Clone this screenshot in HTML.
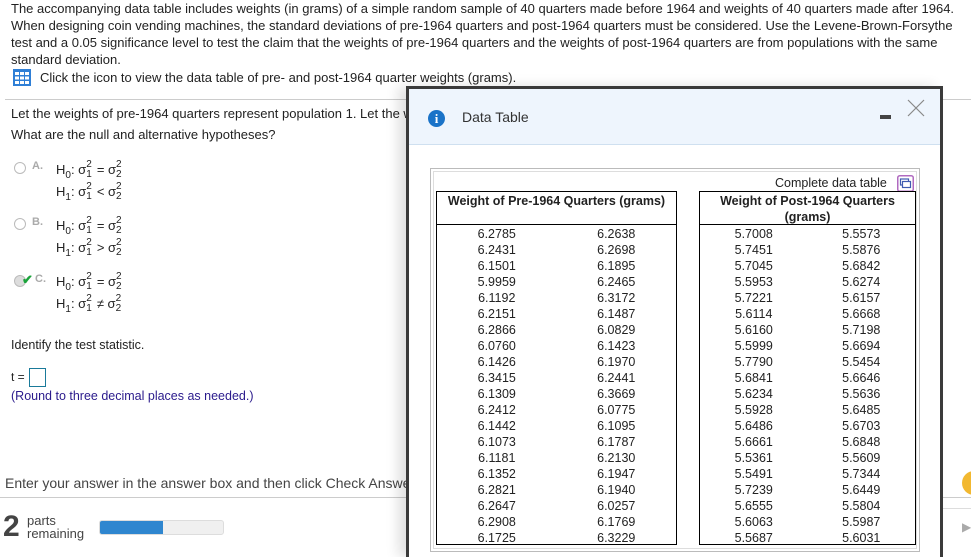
<!DOCTYPE html>
<html style="overflow:hidden;width:971px;height:557px"><head><meta charset="utf-8"><style>
*{margin:0;padding:0;box-sizing:border-box}
body{width:971px;height:557px;overflow:hidden;background:#fff;font-family:"Liberation Sans",Arial,sans-serif;color:#222;position:relative}
.a{position:absolute;white-space:nowrap}
.t{font-size:13px;line-height:17px}
.radio{position:absolute;width:12px;height:12px;border:1px solid #bbb;border-radius:50%;background:#fff}
.lbl{position:absolute;font-size:11px;color:#aaa;font-weight:bold}
.hyp{position:absolute;font-size:13px;white-space:nowrap;line-height:16px}
.ss{display:inline-block;position:relative;width:7px;height:16px;vertical-align:top;font-size:10px}
.ss .u{position:absolute;left:0;top:-5px}
.ss .d{position:absolute;left:0;top:5px}
.sub{font-size:10px;position:relative;top:4px}
.tb{position:absolute;border:1.5px solid #000;font-size:12.5px}
.tb .h{height:33px;border-bottom:1.5px solid #000;font-weight:bold;text-align:center;line-height:16px;padding-top:1px}
.tb .r{display:flex;height:16px;line-height:16px}
.tb .r span{flex:1;text-align:center}
</style></head><body>
<div class="a t" style="left:11px;top:0;width:950px;white-space:normal">The accompanying data table includes weights (in grams) of a simple random sample of 40 quarters made before 1964 and weights of 40 quarters made after 1964. When designing coin vending machines, the standard deviations of pre-1964 quarters and post-1964 quarters must be considered. Use the Levene-Brown-Forsythe test and a 0.05 significance level to test the claim that the weights of pre-1964 quarters and the weights of post-1964 quarters are from populations with the same standard deviation.</div>
<svg class="a" style="left:13px;top:69px" width="18" height="17"><rect x="0" y="0" width="18" height="17" fill="#2f7fd6"/><g fill="#fff"><rect x="2" y="3" width="4" height="3"/><rect x="7" y="3" width="4" height="3"/><rect x="12" y="3" width="4" height="3"/><rect x="2" y="7.5" width="4" height="3"/><rect x="7" y="7.5" width="4" height="3"/><rect x="12" y="7.5" width="4" height="3"/><rect x="2" y="12" width="4" height="3"/><rect x="7" y="12" width="4" height="3"/><rect x="12" y="12" width="4" height="3"/></g></svg>
<div class="a t" style="left:40px;top:69px">Click the icon to view the data table of pre- and post-1964 quarter weights (grams).</div>
<div class="a" style="left:5px;top:99px;width:966px;height:1px;background:#ccc"></div>
<div class="a t" style="left:11px;top:105px">Let the weights of pre-1964 quarters represent population 1. Let the weights</div>
<div class="a t" style="left:11px;top:126px">What are the null and alternative hypotheses?</div>

<div class="radio" style="left:14px;top:162px"></div><div class="lbl" style="left:32px;top:160px">A.</div>
<div class="hyp" style="left:56px;top:162px">H<span class="sub">0</span>: σ<span class="ss"><span class="u">2</span><span class="d">1</span></span> = σ<span class="ss"><span class="u">2</span><span class="d">2</span></span></div>
<div class="hyp" style="left:56px;top:184px">H<span class="sub">1</span>: σ<span class="ss"><span class="u">2</span><span class="d">1</span></span> &lt; σ<span class="ss"><span class="u">2</span><span class="d">2</span></span></div>
<div class="radio" style="left:14px;top:218px"></div><div class="lbl" style="left:32px;top:216px">B.</div>
<div class="hyp" style="left:56px;top:218px">H<span class="sub">0</span>: σ<span class="ss"><span class="u">2</span><span class="d">1</span></span> = σ<span class="ss"><span class="u">2</span><span class="d">2</span></span></div>
<div class="hyp" style="left:56px;top:240px">H<span class="sub">1</span>: σ<span class="ss"><span class="u">2</span><span class="d">1</span></span> &gt; σ<span class="ss"><span class="u">2</span><span class="d">2</span></span></div>
<div class="radio" style="left:14px;top:275px;background:#ddd"></div><div class="a" style="left:22px;top:272px;color:#1aa33a;font-size:13px;font-weight:bold">✔</div><div class="lbl" style="left:35px;top:273px">C.</div>
<div class="hyp" style="left:56px;top:274px">H<span class="sub">0</span>: σ<span class="ss"><span class="u">2</span><span class="d">1</span></span> = σ<span class="ss"><span class="u">2</span><span class="d">2</span></span></div>
<div class="hyp" style="left:56px;top:296px">H<span class="sub">1</span>: σ<span class="ss"><span class="u">2</span><span class="d">1</span></span> ≠ σ<span class="ss"><span class="u">2</span><span class="d">2</span></span></div>

<div class="a" style="left:11px;top:338px;font-size:12.5px">Identify the test statistic.</div>
<div class="a" style="left:11px;top:370px;font-size:12px">t =</div>
<div class="a" style="left:29px;top:368px;width:17px;height:19px;border:1px solid #1a7a9a"></div>
<div class="a" style="left:11px;top:389px;font-size:12.5px;color:#2a1a8c">(Round to three decimal places as needed.)</div>
<div class="a" style="left:5px;top:475px;font-size:14px;color:#444">Enter your answer in the answer box and then click Check Answer.</div>
<div class="a" style="left:0;top:497px;width:971px;height:1px;background:#ccc"></div>
<div class="a" style="left:3px;top:509px;font-size:30px;font-weight:bold;color:#444;line-height:36px">2</div>
<div class="a" style="left:27px;top:514px;font-size:13px;color:#444;line-height:13px">parts<br>remaining</div>
<div class="a" style="left:99px;top:520px;width:125px;height:15px;border-radius:3px;background:#f0f0f0;border:1px solid #ddd;overflow:hidden"><div style="width:63px;height:100%;background:#2f86cf"></div></div>
<div class="a" style="left:962px;top:471px;width:24px;height:24px;border-radius:50%;background:#f2b830"></div>
<div class="a" style="left:962px;top:520px;color:#aaa;font-size:12px">▶</div>
<div class="a" style="left:943px;top:508px;width:28px;height:1px;background:#ddd"></div>

<div class="a" style="left:406px;top:86px;width:537px;height:471px;background:#fff;border:3px solid #3a3a3a;border-bottom:none;box-shadow:-8px 0 12px rgba(0,0,0,.12)">
 <div style="position:absolute;left:0;top:0;width:531px;height:56px;background:#eef5fd;border-bottom:1px solid #cfe0f0"></div>
 <div style="position:absolute;left:19px;top:21px;width:17px;height:17px;border-radius:50%;background:#1a73c8;color:#fff;font-weight:bold;font-size:13px;text-align:center;line-height:17px;font-family:'Liberation Serif',serif">i</div>
 <div style="position:absolute;left:53px;top:20px;font-size:14px;color:#333">Data Table</div>
 <div style="position:absolute;left:471px;top:26px;width:11px;height:4px;background:#444"></div>
 <svg style="position:absolute;left:498px;top:10px" width="18" height="18"><path d="M1 1L17 17M17 1L1 17" stroke="#888" stroke-width="1.2"/></svg>
 <div style="position:absolute;left:21px;top:79px;width:490px;height:384px;border:1px solid #bbb"></div>
 <div style="position:absolute;left:24px;top:82px;width:484px;height:378px;border:1px solid #ddd"></div>
 <div style="position:absolute;left:366px;top:87px;font-size:12.5px">Complete data table</div>
 <svg style="position:absolute;left:488px;top:86px" width="17" height="17"><rect x="0.75" y="0.75" width="15.5" height="15.5" rx="2" fill="#fff" stroke="#b06ac0" stroke-width="1.5"/><rect x="3.5" y="4" width="8" height="6" fill="none" stroke="#3f5bb0" stroke-width="1.2"/><rect x="5.5" y="6.5" width="8" height="6" fill="#fff" stroke="#3f5bb0" stroke-width="1.2"/></svg>
 <div class="tb" style="left:27px;top:102px;width:241px;height:354px">
  <div class="h">Weight of Pre-1964 Quarters (grams)</div>
  <div style="padding-top:1px">
  <div class="r"><span>6.2785</span><span>6.2638</span></div>
  <div class="r"><span>6.2431</span><span>6.2698</span></div>
  <div class="r"><span>6.1501</span><span>6.1895</span></div>
  <div class="r"><span>5.9959</span><span>6.2465</span></div>
  <div class="r"><span>6.1192</span><span>6.3172</span></div>
  <div class="r"><span>6.2151</span><span>6.1487</span></div>
  <div class="r"><span>6.2866</span><span>6.0829</span></div>
  <div class="r"><span>6.0760</span><span>6.1423</span></div>
  <div class="r"><span>6.1426</span><span>6.1970</span></div>
  <div class="r"><span>6.3415</span><span>6.2441</span></div>
  <div class="r"><span>6.1309</span><span>6.3669</span></div>
  <div class="r"><span>6.2412</span><span>6.0775</span></div>
  <div class="r"><span>6.1442</span><span>6.1095</span></div>
  <div class="r"><span>6.1073</span><span>6.1787</span></div>
  <div class="r"><span>6.1181</span><span>6.2130</span></div>
  <div class="r"><span>6.1352</span><span>6.1947</span></div>
  <div class="r"><span>6.2821</span><span>6.1940</span></div>
  <div class="r"><span>6.2647</span><span>6.0257</span></div>
  <div class="r"><span>6.2908</span><span>6.1769</span></div>
  <div class="r"><span>6.1725</span><span>6.3229</span></div>
  </div>
 </div>
 <div class="tb" style="left:290px;top:102px;width:217px;height:354px">
  <div class="h">Weight of Post-1964 Quarters<br>(grams)</div>
  <div style="padding-top:1px">
  <div class="r"><span>5.7008</span><span>5.5573</span></div>
  <div class="r"><span>5.7451</span><span>5.5876</span></div>
  <div class="r"><span>5.7045</span><span>5.6842</span></div>
  <div class="r"><span>5.5953</span><span>5.6274</span></div>
  <div class="r"><span>5.7221</span><span>5.6157</span></div>
  <div class="r"><span>5.6114</span><span>5.6668</span></div>
  <div class="r"><span>5.6160</span><span>5.7198</span></div>
  <div class="r"><span>5.5999</span><span>5.6694</span></div>
  <div class="r"><span>5.7790</span><span>5.5454</span></div>
  <div class="r"><span>5.6841</span><span>5.6646</span></div>
  <div class="r"><span>5.6234</span><span>5.5636</span></div>
  <div class="r"><span>5.5928</span><span>5.6485</span></div>
  <div class="r"><span>5.6486</span><span>5.6703</span></div>
  <div class="r"><span>5.6661</span><span>5.6848</span></div>
  <div class="r"><span>5.5361</span><span>5.5609</span></div>
  <div class="r"><span>5.5491</span><span>5.7344</span></div>
  <div class="r"><span>5.7239</span><span>5.6449</span></div>
  <div class="r"><span>5.6555</span><span>5.5804</span></div>
  <div class="r"><span>5.6063</span><span>5.5987</span></div>
  <div class="r"><span>5.5687</span><span>5.6031</span></div>
  </div>
 </div>
</div>
</body></html>
